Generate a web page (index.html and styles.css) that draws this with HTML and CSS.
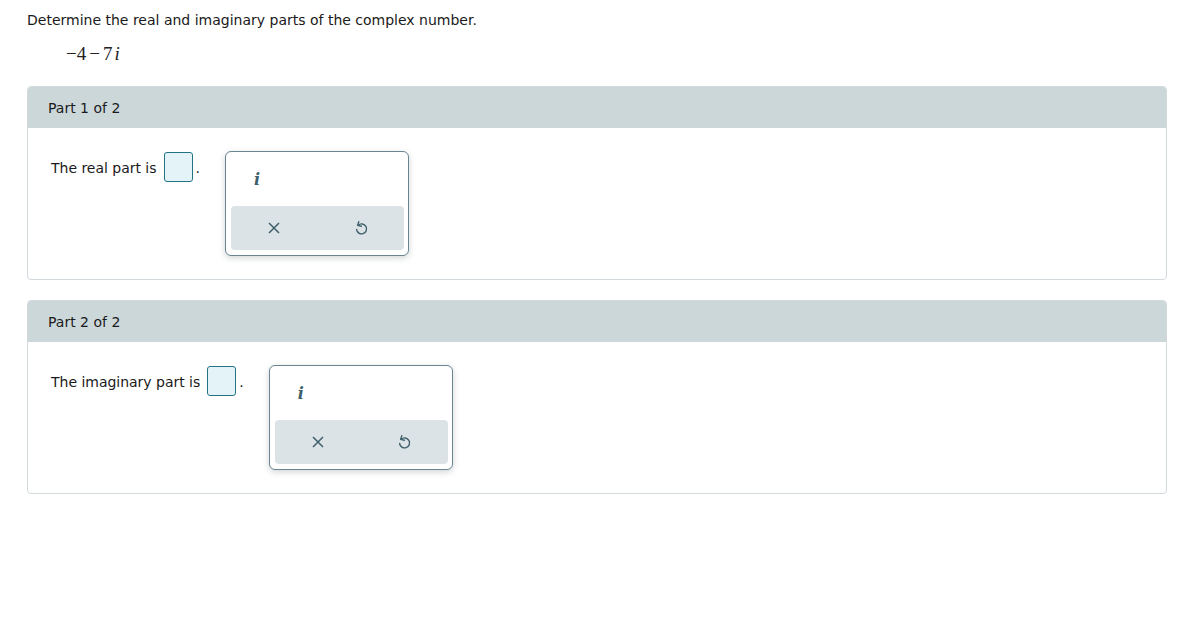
FILE: index.html
```html
<!DOCTYPE html>
<html>
<head>
<meta charset="utf-8">
<link rel="stylesheet" href="styles.css">
</head>
<body>
<div class="page">
  <p class="prompt">Determine the real and imaginary parts of the complex number.</p>
  <div class="math"><span>−4</span><span class="op">−</span><span>7</span><span class="var">i</span></div>

  <section class="card">
    <div class="card-head">Part 1 of 2</div>
    <div class="card-body">
      <div class="answer">
        <span class="label">The real part is</span>
        <span class="box"></span>
        <span class="dot">.</span>
      </div>
      <div class="pad">
        <div class="keys"><span class="key-i">i</span></div>
        <div class="bar">
          <button class="btn" aria-label="clear">
            <svg width="14" height="14" viewBox="0 0 14 14"><path d="M2 2 L12 12 M12 2 L2 12" stroke="#3e5f6b" stroke-width="1.5" fill="none"/></svg>
          </button>
          <button class="btn" aria-label="undo">
            <svg width="14" height="16" viewBox="0 0 14 16"><path d="M4.2 5.2 A5 5 0 1 1 2.6 9.4" stroke="#3e5f6b" stroke-width="1.4" fill="none" stroke-linecap="round"/><path d="M4.8 1.6 L3.6 5.4 L7.4 6.2" stroke="#3e5f6b" stroke-width="1.4" fill="none" stroke-linecap="round" stroke-linejoin="round"/></svg>
          </button>
        </div>
      </div>
    </div>
  </section>

  <section class="card">
    <div class="card-head">Part 2 of 2</div>
    <div class="card-body">
      <div class="answer">
        <span class="label">The imaginary part is</span>
        <span class="box"></span>
        <span class="dot">.</span>
      </div>
      <div class="pad">
        <div class="keys"><span class="key-i">i</span></div>
        <div class="bar">
          <button class="btn" aria-label="clear">
            <svg width="14" height="14" viewBox="0 0 14 14"><path d="M2 2 L12 12 M12 2 L2 12" stroke="#3e5f6b" stroke-width="1.5" fill="none"/></svg>
          </button>
          <button class="btn" aria-label="undo">
            <svg width="14" height="16" viewBox="0 0 14 16"><path d="M4.2 5.2 A5 5 0 1 1 2.6 9.4" stroke="#3e5f6b" stroke-width="1.4" fill="none" stroke-linecap="round"/><path d="M4.8 1.6 L3.6 5.4 L7.4 6.2" stroke="#3e5f6b" stroke-width="1.4" fill="none" stroke-linecap="round" stroke-linejoin="round"/></svg>
          </button>
        </div>
      </div>
    </div>
  </section>
</div>
</body>
</html>
```
FILE: styles.css
```css
* { box-sizing: border-box; }
body {
  margin: 0;
  background: #fff;
  font-family: "DejaVu Sans", Verdana, sans-serif;
  font-size: 14px;
  color: #1a1a1a;
}
.page {
  padding: 11px 26px 0 27px;
}
.prompt {
  margin: 0;
  line-height: 18px;
}
.math {
  font-family: "Liberation Serif", "Times New Roman", serif;
  font-size: 19px;
  line-height: 20px;
  margin: 15px 0 0 39px;
  color: #222;
  display: flex;
  align-items: baseline;
}
.math .op { margin: 0 3px; }
.math .var { font-style: italic; margin-left: 2px; }
.card {
  margin-top: 22px;
  border: 1px solid #d2dadd;
  border-radius: 4px;
  overflow: hidden;
}
.card + .card { margin-top: 20px; }
.card-head {
  background: #ccd7da;
  margin: -1px -1px 0 -1px;
  height: 42px;
  padding-top: 2px;
  line-height: 40px;
  padding-left: 21px;
}
.card-body {
  display: flex;
  align-items: flex-start;
  padding: 23px 23px 23px 23px;
}
.answer {
  display: flex;
  align-items: flex-start;
  padding-top: 1px;
}
.label { line-height: 30px; padding-top: 1px; letter-spacing: -0.02px; }
.box {
  width: 29px;
  height: 30px;
  margin-left: 7px;
  border: 1px solid #237385;
  border-radius: 3px;
  background: #e4f3f7;
}
.dot {
  margin-left: 3px;
  line-height: 30px;
  padding-top: 1px;
}
.pad {
  margin-left: 25px;
  width: 184px;
  border: 1px solid #6a858f;
  border-radius: 6px;
  background: #fff;
  box-shadow: 0 2px 6px rgba(40, 60, 70, 0.22);
  padding: 0 4px 5px 5px;
}
.keys {
  height: 54px;
  display: flex;
  align-items: center;
  padding-left: 23px;
}
.key-i {
  font-family: "DejaVu Serif", "Liberation Serif", serif;
  font-style: italic;
  font-weight: bold;
  font-size: 16px;
  color: #3e5f6b;
}
.bar {
  display: flex;
  height: 44px;
  background: #dce3e6;
  border-radius: 4px;
}
.btn {
  flex: 1;
  border: 0;
  background: transparent;
  padding: 0;
  display: flex;
  align-items: center;
  justify-content: center;
  cursor: pointer;
}
```
